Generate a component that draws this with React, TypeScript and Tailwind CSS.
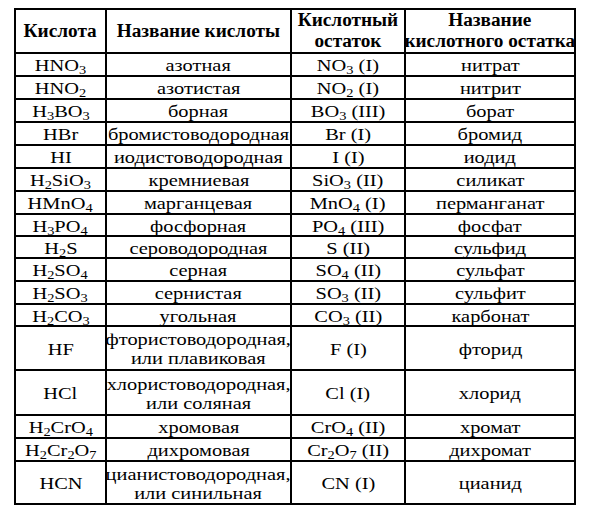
import React from "react";

const S = ({ c }: { c: string }) => <sub className="text-[12px]">{c}</sub>;

type Row = { h: number; a: React.ReactNode; n: React.ReactNode; r: React.ReactNode; rn: string };

const rows: Row[] = [
  { h: 23, a: <>HNO<S c="3" /></>, n: "азотная", r: <>NO<S c="3" /> (I)</>, rn: "нитрат" },
  { h: 23, a: <>HNO<S c="2" /></>, n: "азотистая", r: <>NO<S c="2" /> (I)</>, rn: "нитрит" },
  { h: 23, a: <>H<S c="3" />BO<S c="3" /></>, n: "борная", r: <>BO<S c="3" /> (III)</>, rn: "борат" },
  { h: 23, a: <>HBr</>, n: "бромистоводородная", r: <>Br (I)</>, rn: "бромид" },
  { h: 23, a: <>HI</>, n: "иодистоводородная", r: <>I (I)</>, rn: "иодид" },
  { h: 23, a: <>H<S c="2" />SiO<S c="3" /></>, n: "кремниевая", r: <>SiO<S c="3" /> (II)</>, rn: "силикат" },
  { h: 23, a: <>HMnO<S c="4" /></>, n: "марганцевая", r: <>MnO<S c="4" /> (I)</>, rn: "перманганат" },
  { h: 22, a: <>H<S c="3" />PO<S c="4" /></>, n: "фосфорная", r: <>PO<S c="4" /> (III)</>, rn: "фосфат" },
  { h: 22, a: <>H<S c="2" />S</>, n: "сероводородная", r: <>S (II)</>, rn: "сульфид" },
  { h: 23, a: <>H<S c="2" />SO<S c="4" /></>, n: "серная", r: <>SO<S c="4" /> (II)</>, rn: "сульфат" },
  { h: 23, a: <>H<S c="2" />SO<S c="3" /></>, n: "сернистая", r: <>SO<S c="3" /> (II)</>, rn: "сульфит" },
  { h: 22, a: <>H<S c="2" />CO<S c="3" /></>, n: "угольная", r: <>CO<S c="3" /> (II)</>, rn: "карбонат" },
  { h: 44, a: <>HF</>, n: <>фтористоводородная,<br />или плавиковая</>, r: <>F (I)</>, rn: "фторид" },
  { h: 45, a: <>HCl</>, n: <>хлористоводородная,<br />или соляная</>, r: <>Cl (I)</>, rn: "хлорид" },
  { h: 23, a: <>H<S c="2" />CrO<S c="4" /></>, n: "хромовая", r: <>CrO<S c="4" /> (II)</>, rn: "хромат" },
  { h: 23, a: <>H<S c="2" />Cr<S c="2" />O<S c="7" /></>, n: "дихромовая", r: <>Cr<S c="2" />O<S c="7" /> (II)</>, rn: "дихромат" },
  { h: 43, a: <>HCN</>, n: <>цианистоводородная,<br />или синильная</>, r: <>CN (I)</>, rn: "цианид" },
];

const cell = "border-2 border-black text-center align-middle p-0 text-[0px] leading-[0px]";
const body = "inline-block align-middle whitespace-nowrap text-[17px] leading-[19px] scale-x-[1.2] translate-y-[1px]";
const head = "inline-block align-middle whitespace-nowrap font-bold text-[18px] leading-[21px] scale-x-[1.07]";

export default function App() {
  return (
    <div className="w-[590px] h-[516px] bg-white pt-[8px] pl-[14px] text-black" style={{ fontFamily: '"Liberation Serif", "Times New Roman", serif' }}>
      <table className="border-collapse table-fixed w-[560px]">
        <colgroup>
          <col className="w-[91px]" />
          <col className="w-[185px]" />
          <col className="w-[114px]" />
          <col className="w-[170px]" />
        </colgroup>
        <thead>
          <tr className="h-[43px]">
            <th className={cell}><span className={head}>Кислота</span></th>
            <th className={cell}><span className={head}>Название кислоты</span></th>
            <th className={cell}><span className={head}>Кислотный<br />остаток</span></th>
            <th className={cell}><span className={head}>Название<br />кислотного остатка</span></th>
          </tr>
        </thead>
        <tbody>
          {rows.map((r, i) => (
            <tr key={i} style={{ height: r.h }}>
              <td className={cell}><span className={body}>{r.a}</span></td>
              <td className={cell}><span className={body}>{r.n}</span></td>
              <td className={cell}><span className={body}>{r.r}</span></td>
              <td className={cell}><span className={body}>{r.rn}</span></td>
            </tr>
          ))}
        </tbody>
      </table>
    </div>
  );
}
